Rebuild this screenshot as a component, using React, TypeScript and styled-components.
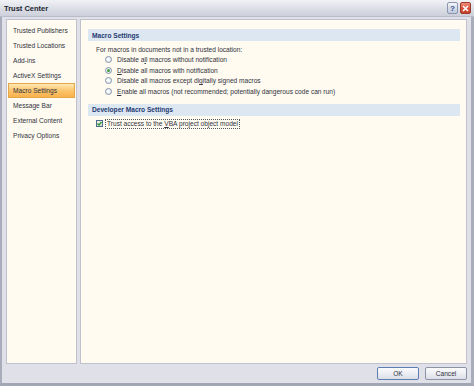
import styled, { createGlobalStyle } from "styled-components";

const GlobalStyle = createGlobalStyle`
  html, body {
    margin: 0;
    padding: 0;
  }
  body {
    font-family: "Liberation Sans", Arial, sans-serif;
    background: #dfe0e8;
  }
`;

const Window = styled.div`
  width: 474px;
  height: 386px;
  box-sizing: border-box;
  display: flex;
  flex-direction: column;
  background: #dfe0e8;
`;

const TitleBar = styled.div`
  height: 17px;
  flex: none;
  display: flex;
  align-items: center;
  padding: 0 3px 0 4px;
  box-sizing: border-box;
  background: linear-gradient(#f1f2f6, #dcdee6 55%, #cdd0da);
  border-bottom: 1px solid #b9bdc9;
`;

const Title = styled.div`
  flex: 1;
  font-size: 7.5px;
  font-weight: bold;
  color: #202430;
  padding-top: 1px;
`;

const CaptionButton = styled.div<{ $close?: boolean }>`
  width: 11px;
  height: 12px;
  margin-left: 2px;
  box-sizing: border-box;
  border: 1px solid ${(p) => (p.$close ? "#9c3b2e" : "#8c95ad")};
  border-radius: 2px;
  display: flex;
  align-items: center;
  justify-content: center;
  font-size: 8px;
  font-weight: bold;
  color: ${(p) => (p.$close ? "#ffffff" : "#34508a")};
  background: ${(p) =>
    p.$close
      ? "linear-gradient(#f08d78, #d9513b 55%, #c3402c)"
      : "linear-gradient(#f4f6fb, #d3d9e7 55%, #c2cadc)"};
`;

const Frame = styled.div`
  flex: 1;
  display: flex;
  flex-direction: column;
  border-left: 2px solid #a9acba;
  border-right: 3px solid #a9acba;
  border-bottom: 3px solid #a2a5b4;
`;

const Content = styled.div`
  display: flex;
  gap: 3px;
  padding: 2px 4px 0 4px;
  height: 347px;
  box-sizing: border-box;
`;

const Panel = styled.div<{ $width?: number }>`
  ${(p) => (p.$width ? `width: ${p.$width}px; flex: none;` : "flex: 1;")}
  box-sizing: border-box;
  background: #fffbf0;
  border: 1px solid #bfc1cc;
`;

const NavList = styled.div`
  display: flex;
  flex-direction: column;
  padding-top: 3px;
`;

const NavItem = styled.div<{ $active?: boolean }>`
  height: 15px;
  display: flex;
  align-items: center;
  margin: 0 1px;
  padding-left: 5px;
  box-sizing: border-box;
  font-size: 6.6px;
  color: #30323e;
  ${(p) =>
    p.$active &&
    `
    background: linear-gradient(#fee9b4, #fcc56d 50%, #f9b14c);
    border: 1px solid #e5a64b;
    padding-left: 4px;
  `}
`;

const SectionHeader = styled.div<{ $top: number }>`
  margin: ${(p) => p.$top}px 6px 0 7px;
  height: 12px;
  padding-left: 4px;
  display: flex;
  align-items: center;
  background: #dde7f1;
  font-size: 6.6px;
  font-weight: bold;
  color: #1f3a72;
`;

const Intro = styled.div`
  margin-top: 4px;
  padding-left: 15px;
  font-size: 6.6px;
  line-height: 9px;
  color: #30323e;
`;

const OptionList = styled.div`
  display: flex;
  flex-direction: column;
  padding-left: 24px;
`;

const OptionRow = styled.label`
  height: 10.7px;
  display: flex;
  align-items: center;
  gap: 5px;
  font-size: 6.6px;
  color: #30323e;
`;

const Radio = styled.span<{ $checked?: boolean }>`
  width: 7px;
  height: 7px;
  box-sizing: border-box;
  border-radius: 50%;
  border: 1px solid #7f93ac;
  background: radial-gradient(circle at 40% 40%, #ffffff, #dde3ea);
  display: flex;
  align-items: center;
  justify-content: center;
  &::after {
    content: "";
    display: ${(p) => (p.$checked ? "block" : "none")};
    width: 3px;
    height: 3px;
    border-radius: 50%;
    background: #3f9b3f;
  }
`;

const CheckRow = styled.div`
  margin-top: 3px;
  padding-left: 15px;
  height: 10px;
  display: flex;
  align-items: center;
  gap: 3px;
  font-size: 6.6px;
  color: #30323e;
`;

const CheckBox = styled.span`
  width: 7px;
  height: 7px;
  box-sizing: border-box;
  border: 1px solid #4e6b8e;
  background: linear-gradient(#eef2e6, #d8e2cc);
  display: flex;
  align-items: center;
  justify-content: center;
`;

const FocusText = styled.span`
  outline: 1px dotted #55585f;
  padding: 0 1px;
  line-height: 8px;
`;

const Key = styled.span`
  text-decoration: underline;
`;

const Footer = styled.div`
  display: flex;
  justify-content: flex-end;
  gap: 6px;
  padding: 3px 4px 0 0;
`;

const Button = styled.button<{ $default?: boolean }>`
  width: 42px;
  height: 13px;
  padding: 0;
  box-sizing: border-box;
  font-family: "Liberation Sans", Arial, sans-serif;
  font-size: 6.6px;
  color: #30323e;
  border-radius: 2px;
  border: 1px solid ${(p) => (p.$default ? "#5d7eb3" : "#8c93a6")};
  background: linear-gradient(#fbfbfd, #eceef3 50%, #dcdfe7);
`;

const navItems = [
  "Trusted Publishers",
  "Trusted Locations",
  "Add-ins",
  "ActiveX Settings",
  "Macro Settings",
  "Message Bar",
  "External Content",
  "Privacy Options",
];

export default function App() {
  return (
    <>
      <GlobalStyle />
      <Window>
        <TitleBar>
          <Title>Trust Center</Title>
          <CaptionButton>?</CaptionButton>
          <CaptionButton $close>
            <svg width="7" height="7" viewBox="0 0 7 7">
              <path d="M1 1 L6 6 M6 1 L1 6" stroke="#fff" strokeWidth="1.6" />
            </svg>
          </CaptionButton>
        </TitleBar>
        <Frame>
          <Content>
            <Panel $width={71}>
              <NavList>
                {navItems.map((item) => (
                  <NavItem key={item} $active={item === "Macro Settings"}>
                    {item}
                  </NavItem>
                ))}
              </NavList>
            </Panel>
            <Panel>
              <SectionHeader $top={9}>Macro Settings</SectionHeader>
              <Intro>For macros in documents not in a trusted location:</Intro>
              <OptionList>
                <OptionRow>
                  <Radio />
                  <span>
                    Disable a<Key>l</Key>l macros without notification
                  </span>
                </OptionRow>
                <OptionRow>
                  <Radio $checked />
                  <span>
                    <Key>D</Key>isable all macros with notification
                  </span>
                </OptionRow>
                <OptionRow>
                  <Radio />
                  <span>
                    Disable all macros except di<Key>g</Key>itally signed macros
                  </span>
                </OptionRow>
                <OptionRow>
                  <Radio />
                  <span>
                    <Key>E</Key>nable all macros (not recommended; potentially dangerous code can run)
                  </span>
                </OptionRow>
              </OptionList>
              <SectionHeader $top={7}>Developer Macro Settings</SectionHeader>
              <CheckRow>
                <CheckBox>
                  <svg width="5" height="5" viewBox="0 0 5 5">
                    <path d="M0.5 2.5 L2 4 L4.5 0.8" stroke="#2f962f" strokeWidth="1.3" fill="none" />
                  </svg>
                </CheckBox>
                <FocusText>
                  Trust access to the <Key>V</Key>BA project object model
                </FocusText>
              </CheckRow>
            </Panel>
          </Content>
          <Footer>
            <Button $default>OK</Button>
            <Button>Cancel</Button>
          </Footer>
        </Frame>
      </Window>
    </>
  );
}
